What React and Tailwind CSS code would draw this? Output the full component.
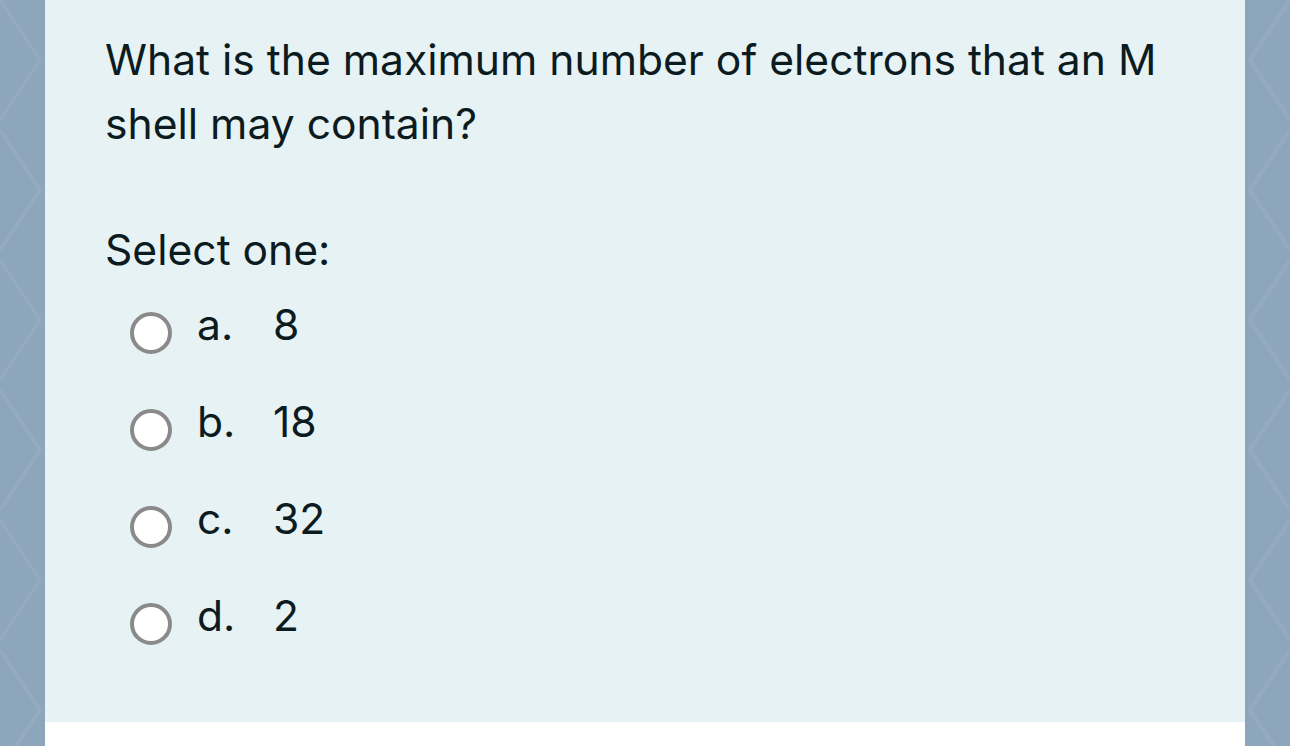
function SidePattern() {
  return (
    <svg className="w-full h-full" viewBox="0 0 45 746" preserveAspectRatio="none">
      {[0, 1, 2, 3, 4, 5].map((i) => (
        <g key={i} stroke="#ffffff" strokeOpacity="0.05" strokeWidth="4" fill="none">
          <path d={`M0 ${i * 130} L40 ${i * 130 + 60} L0 ${i * 130 + 120}`} />
        </g>
      ))}
    </svg>
  );
}

export default function App() {
  const opts = [
    ["a.", "8"],
    ["b.", "18"],
    ["c.", "32"],
    ["d.", "2"],
  ];
  return (
    <div className="w-[1290px] h-[746px] overflow-hidden flex bg-[#8ea6bc]" style={{ fontFamily: "Inter, 'Noto Sans', sans-serif" }}>
      <div className="w-[45px] shrink-0">
        <SidePattern />
      </div>
      <div className="w-[1200px] shrink-0 flex flex-col">
        <div className="h-[722px] bg-[#e6f2f4] pl-[60px] pr-[40px] pt-[28px] text-[#0c1b20]">
          <p className="text-[42.6px] leading-[64px]">What is the maximum number of electrons that an M shell may contain?</p>
          <p className="text-[42.6px] leading-[64px] mt-[62px]">Select one:</p>
          <div className="flex flex-col mt-[-6px]">
            {opts.map(([l, v]) => (
              <div key={l} className="flex items-center h-[97px] pl-[25px]">
                <span className="w-[42px] h-[42px] rounded-full bg-white border-[4px] border-[#8a8a8a] shrink-0 mt-[16px]" />
                <span className="text-[42.6px] ml-[25px] w-[76px]">{l}</span>
                <span className="text-[42.6px]">{v}</span>
              </div>
            ))}
          </div>
        </div>
        <div className="flex-1 bg-white" />
      </div>
      <div className="w-[45px] shrink-0 scale-x-[-1]">
        <SidePattern />
      </div>
    </div>
  );
}
